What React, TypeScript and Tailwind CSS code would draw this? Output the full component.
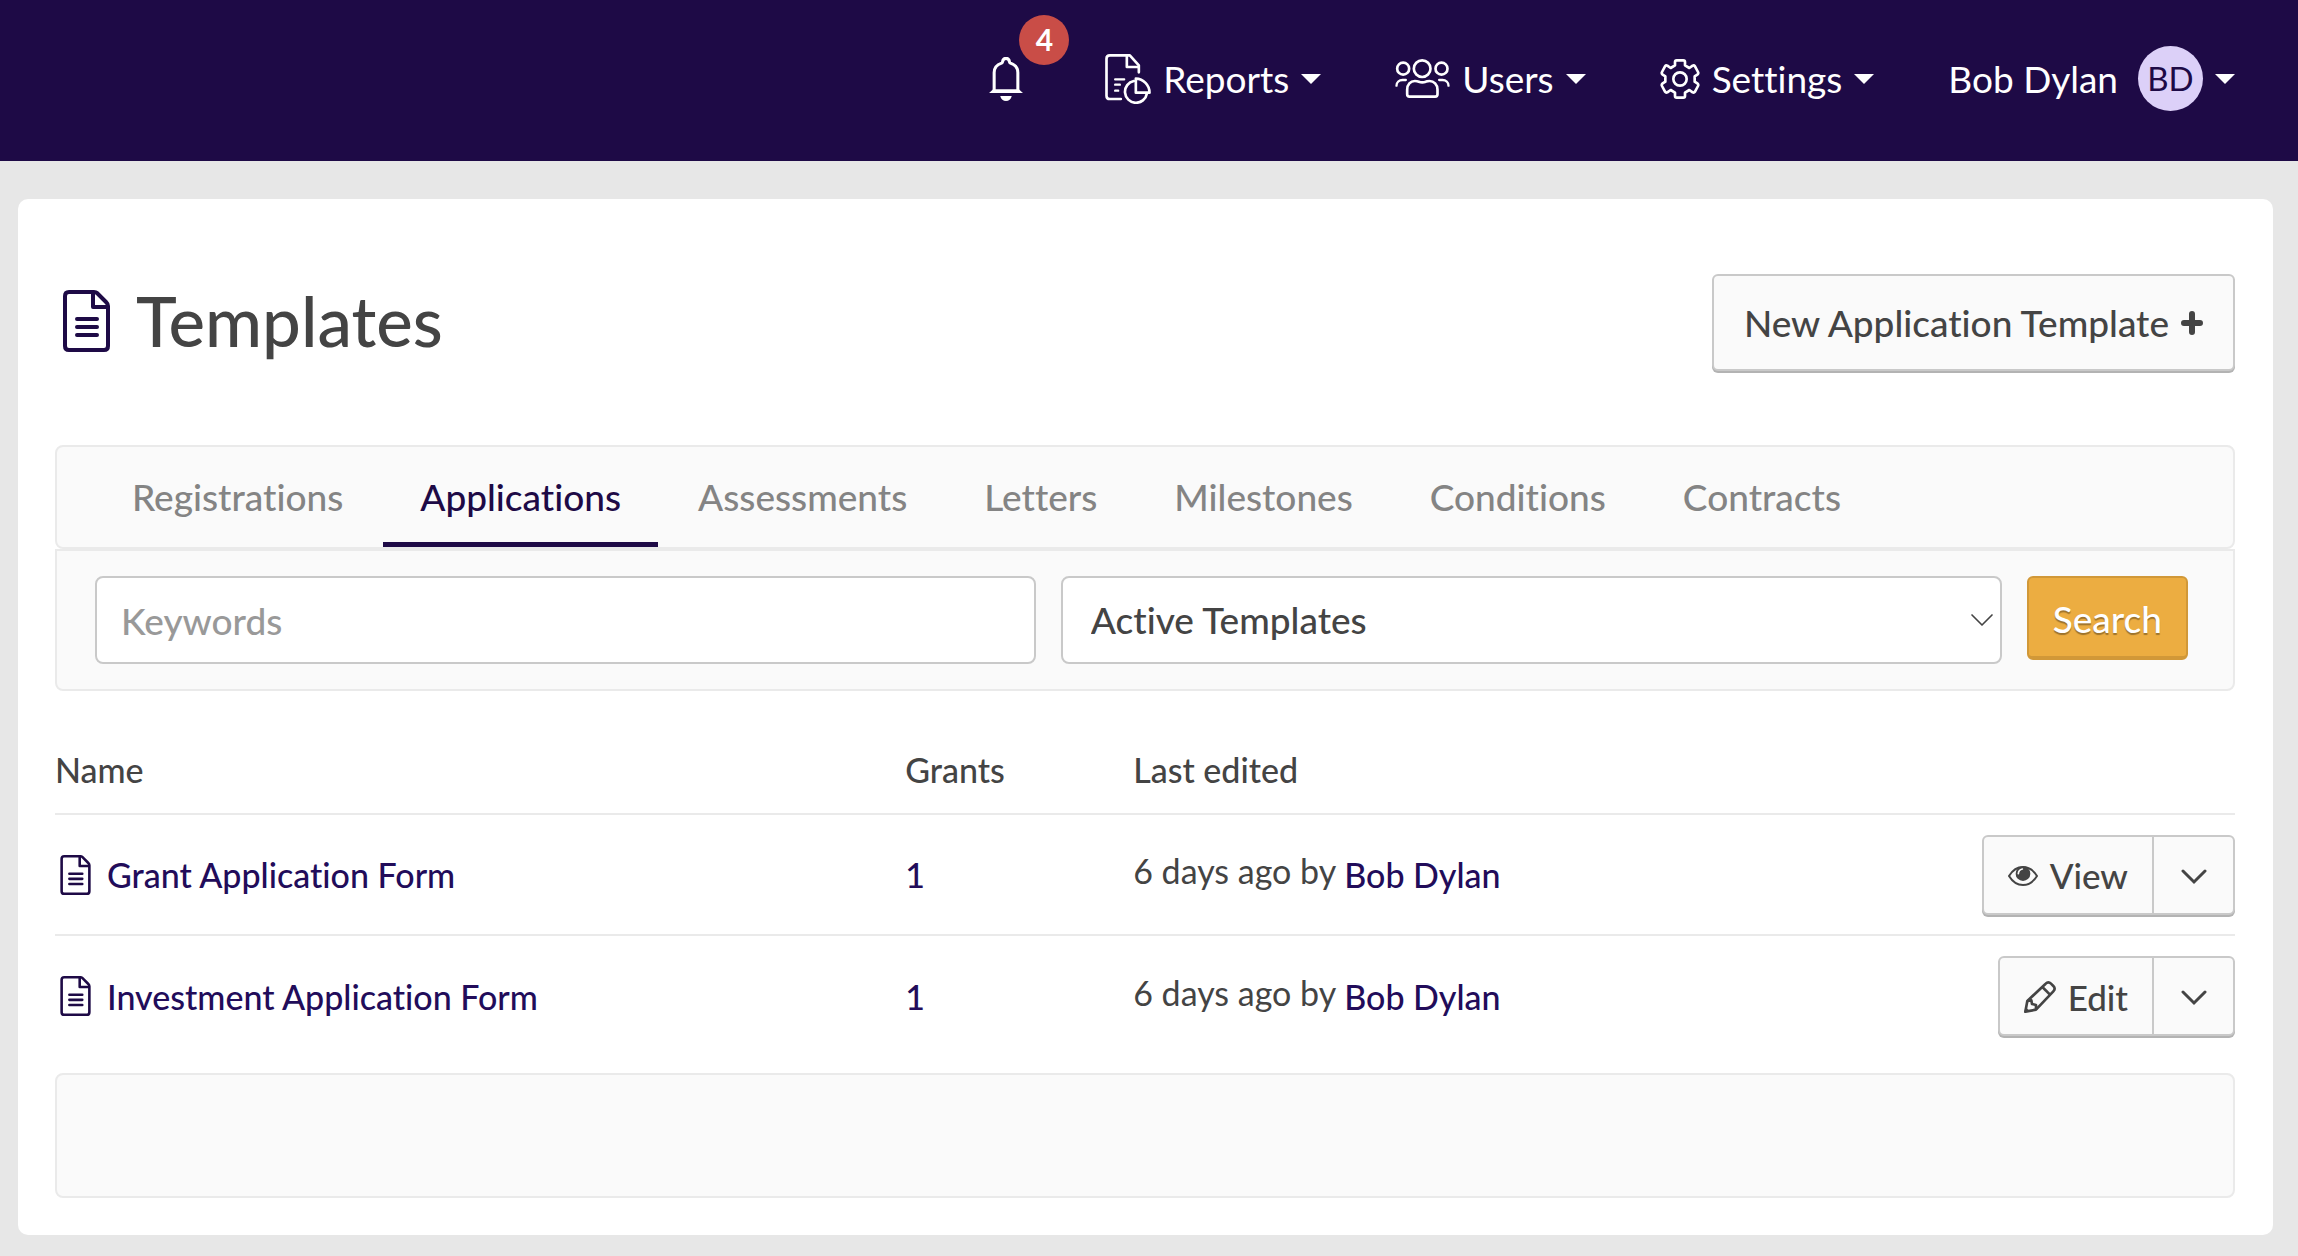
import { useState } from "react";
import type { ReactNode } from "react";
import { ChevronDown } from "lucide-react";

type Template = {
  id: string;
  name: string;
  grants: number;
  edited: string;
  editedBy: string;
  action: "View" | "Edit";
};

const templates: Template[] = [
  {
    id: "grant",
    name: "Grant Application Form",
    grants: 1,
    edited: "6 days ago by",
    editedBy: "Bob Dylan",
    action: "View",
  },
  {
    id: "investment",
    name: "Investment Application Form",
    grants: 1,
    edited: "6 days ago by",
    editedBy: "Bob Dylan",
    action: "Edit",
  },
];

const tabs = [
  "Registrations",
  "Applications",
  "Assessments",
  "Letters",
  "Milestones",
  "Conditions",
  "Contracts",
];

function BellIcon() {
  return (
    <svg viewBox="0 0 100 130" className="h-[44px] w-[34px]" aria-hidden="true">
      <path
        d="M15 98V46C15 32 25 22 37 18C39 17 40 15 40 13C41 7 45 4 50 4S59 7 60 13C60 15 61 17 63 18C75 22 85 32 85 46V98"
        fill="none"
        stroke="currentColor"
        strokeWidth="9"
      />
      <path d="M12 95H88L100 106H0Z" fill="currentColor" />
      <path d="M33 115H67C65 125 58 130 50 130S35 125 33 115Z" fill="currentColor" />
    </svg>
  );
}

function ReportIcon() {
  return (
    <svg viewBox="0 0 137 150" className="h-[50px] w-[46px]" aria-hidden="true">
      <g
        fill="none"
        stroke="currentColor"
        strokeWidth="8"
        strokeLinecap="round"
        strokeLinejoin="round"
      >
        <path d="M47 135H14Q4 135 4 125V14Q4 4 14 4H74L101 34V55" />
        <path d="M65 5V39H100" />
        <path d="M30 76H57M30 92H44M30 110H39" strokeWidth="7" />
        <path d="M92 74V116H133A42 42 0 0 0 92 74Z" />
        <path d="M86 81A33 33 0 1 0 125 119" />
      </g>
    </svg>
  );
}

function UsersIcon() {
  return (
    <svg viewBox="0 0 164 117" className="h-[39px] w-[55px]" aria-hidden="true">
      <g fill="none" stroke="currentColor" strokeWidth="8" strokeLinecap="round">
        <circle cx="81" cy="29" r="25" />
        <circle cx="24" cy="29" r="18" />
        <circle cx="139" cy="29" r="18" />
        <path d="M43 113H120Q127 113 127 106V92C127 76 116 66 103 66Q95 66 92 68Q81 72 71 68Q66 66 59 66C46 66 36 76 36 92V106Q36 113 43 113Z" />
        <path d="M4 80C4 70 12 63 22 63H32M160 80C160 70 152 63 142 63H132" strokeWidth="7" />
      </g>
    </svg>
  );
}

function GearIcon() {
  return (
    <svg viewBox="-60 -60 120 120" className="size-[40px]" aria-hidden="true">
      <g fill="none" stroke="currentColor" strokeWidth="8" strokeLinejoin="round">
        <path d="M-15 -41V-51Q-15 -56 -10 -56H10Q15 -56 15 -51V-41L28 -33L38 -40Q42 -42 45 -38L54 -21Q56 -17 53 -14L44 -8V8L53 14Q56 17 54 21L45 38Q42 42 38 40L28 33L15 41V51Q15 56 10 56H-10Q-15 56 -15 51V41L-28 33L-38 40Q-42 42 -45 38L-54 21Q-56 17 -53 14L-44 8V-8L-53 -14Q-56 -17 -54 -21L-45 -38Q-42 -42 -38 -40L-28 -33Z" />
        <circle r="20" />
      </g>
    </svg>
  );
}

function DocumentIcon({ className }: { className: string }) {
  return (
    <svg viewBox="0 0 47 62" className={className} aria-hidden="true">
      <g
        fill="none"
        stroke="currentColor"
        strokeWidth="4"
        strokeLinecap="round"
        strokeLinejoin="round"
      >
        <path d="M6 2H31Q33 2 34 3L43 12Q45 14 45 16V56Q45 60 41 60H6Q2 60 2 56V6Q2 2 6 2Z" />
        <path d="M30 3V17H44" />
        <path d="M14 29H34M14 37H34M14 45H34" />
      </g>
    </svg>
  );
}

function EyeIcon() {
  return (
    <svg viewBox="0 0 90 60" className="h-[20px] w-[30px]" aria-hidden="true">
      <path
        d="M3 30C14 12 28 3 45 3S76 12 87 30C76 48 62 57 45 57S14 48 3 30Z"
        fill="none"
        stroke="currentColor"
        strokeWidth="6"
      />
      <circle cx="45" cy="23" r="22" fill="currentColor" />
      <path d="M31 23Q32 11 43 9" fill="none" stroke="#fafafa" strokeWidth="5" strokeLinecap="round" />
    </svg>
  );
}

function PencilIcon() {
  return (
    <svg viewBox="0 0 96 96" className="size-[32px]" aria-hidden="true">
      <g fill="none" stroke="currentColor" strokeWidth="8" strokeLinejoin="round">
        <path d="M10 60L65 8Q73 0 81 8L88 15Q96 23 88 31L36 86L4 92Z" />
        <path d="M55 18L78 41" />
        <path d="M10 60L22 58L24 69L36 72L36 86" />
      </g>
      <path d="M4 78L18 91L1 95Z" fill="currentColor" />
    </svg>
  );
}

function PlusIcon() {
  return (
    <svg viewBox="0 0 22 26" className="h-[26px] w-[22px]" aria-hidden="true">
      <path d="M11 4V22M3 13H19" stroke="currentColor" strokeWidth="6" strokeLinecap="round" />
    </svg>
  );
}

function Caret() {
  return (
    <svg viewBox="0 0 20 10" className="h-[10px] w-[20px]" aria-hidden="true">
      <path d="M0 0H20L10 10Z" fill="currentColor" />
    </svg>
  );
}

function NavMenu({ icon, label }: { icon: ReactNode; label: string }) {
  return (
    <button type="button" className="flex items-center gap-3">
      {icon}
      <span>{label}</span>
      <Caret />
    </button>
  );
}

function RowActions({ action }: { action: Template["action"] }) {
  return (
    <div className="inline-flex h-[80px] rounded-[6px] border-2 border-[#c9c9c9] bg-[#fafafa] text-[#444] shadow-[0_2px_0_#b3b3b3]">
      <button
        type="button"
        className="flex items-center gap-3 border-r-2 border-[#c9c9c9] px-6 pt-[2px] text-[35px] font-medium"
      >
        {action === "View" ? <EyeIcon /> : <PencilIcon />}
        {action}
      </button>
      <button
        type="button"
        aria-label="More actions"
        className="flex w-[79px] items-center justify-center pt-1"
      >
        <svg viewBox="0 0 26 16" className="h-[16px] w-[26px]" aria-hidden="true">
          <path
            d="M2 2L13 13L24 2"
            fill="none"
            stroke="currentColor"
            strokeWidth="3"
            strokeLinecap="round"
          />
        </svg>
      </button>
    </div>
  );
}

export default function App() {
  const [activeTab, setActiveTab] = useState("Applications");

  return (
    <div className="min-h-screen bg-[#e7e7e7] font-['Lato',sans-serif] text-[#444] [font-variant-ligatures:none]">
      <header className="flex h-[161px] items-center justify-end bg-[#1e0a46] pr-[63px] pb-1 text-[37px] text-white">
        <nav className="flex items-center gap-[74px]">
          <button type="button" aria-label="Notifications" className="relative mr-2">
            <BellIcon />
            <span className="absolute -top-[42px] left-[30px] flex size-[50px] items-center justify-center rounded-full bg-[#c94d47] text-[30px] font-bold">
              4
            </span>
          </button>
          <NavMenu icon={<ReportIcon />} label="Reports" />
          <NavMenu icon={<UsersIcon />} label="Users" />
          <NavMenu icon={<GearIcon />} label="Settings" />
          <button type="button" className="flex items-center gap-3">
            <span className="mr-2">Bob Dylan</span>
            <span className="flex size-[65px] items-center justify-center rounded-full bg-[#dcd0f8] text-[33px] text-[#1e0a46]">
              BD
            </span>
            <Caret />
          </button>
        </nav>
      </header>

      <main className="mt-[38px] mr-[25px] ml-[18px] rounded-[10px] bg-white pt-[75px] pr-[38px] pb-[37px] pl-[37px]">
        <div className="mb-[74px] flex items-center justify-between">
          <h1 className="flex items-center gap-[26px] pb-1 pl-2 text-[69px] leading-[80px] font-medium">
            <DocumentIcon className="h-[62px] w-[47px] text-[#1e0a46]" />
            Templates
          </h1>
          <button
            type="button"
            className="flex h-[97px] items-center gap-3 rounded-[6px] border-2 border-[#c9c9c9] bg-[#fafafa] px-[30px] text-[37px] font-medium shadow-[0_2px_0_#b3b3b3]"
          >
            New Application Template
            <PlusIcon />
          </button>
        </div>

        <div
          role="tablist"
          className="flex h-[104px] gap-[3px] rounded-[8px] border-2 border-[#eaeaea] bg-[#fafafa] px-[38px] text-[37px] font-medium"
        >
          {tabs.map((tab) => (
            <button
              key={tab}
              type="button"
              role="tab"
              aria-selected={tab === activeTab}
              onClick={() => setActiveTab(tab)}
              className={
                tab === activeTab
                  ? "border-b-[5px] border-[#1e0a46] px-[37px] pt-1 text-[#1e0a46]"
                  : "border-b-[5px] border-transparent px-[37px] pt-1 text-[#848484]"
              }
            >
              {tab}
            </button>
          ))}
        </div>

        <form
          onSubmit={(e) => e.preventDefault()}
          className="grid grid-cols-[1fr_1fr_auto] items-start gap-[25px] rounded-b-[8px] border-2 border-[#eaeaea] bg-[#fafafa] py-[25px] pr-[45px] pl-[38px] text-[37px] font-medium"
        >
          <input
            type="text"
            aria-label="Keywords"
            placeholder="Keywords"
            className="h-[88px] w-full rounded-[8px] border-2 border-[#c9c9c9] bg-white px-6 placeholder:text-[#999]"
          />
          <div className="relative">
            <select
              aria-label="Template status"
              className="h-[88px] w-full appearance-none rounded-[8px] border-2 border-[#c9c9c9] bg-white px-[28px]"
            >
              <option>Active Templates</option>
              <option>Archived Templates</option>
            </select>
            <ChevronDown
              className="pointer-events-none absolute top-[24px] right-0 size-[40px]"
              strokeWidth={1}
              aria-hidden="true"
            />
          </div>
          <button
            type="submit"
            className="h-[84px] rounded-[6px] border-2 border-b-4 border-[#d19838] bg-[#ecad41] px-6 pt-1 text-white [text-shadow:0_2px_1px_#00000055]"
          >
            Search
          </button>
        </form>

        <table className="mt-[39px] w-full table-fixed text-left text-[34px]">
          <thead>
            <tr className="h-[84px] border-b-2 border-[#eaeaea]">
              <th className="w-[39%] pb-1 font-medium">Name</th>
              <th className="w-[228px] pb-1 font-medium">Grants</th>
              <th className="pb-1 font-medium">Last edited</th>
              <td className="w-[280px]" />
            </tr>
          </thead>
          <tbody className="divide-y-2 divide-[#eaeaea]">
            {templates.map((template) => (
              <tr key={template.id} className="h-[121px]">
                <td>
                  <a
                    href={`#${template.id}`}
                    className="flex items-center gap-4 pl-[5px] font-medium text-[#220c5a]"
                  >
                    <DocumentIcon className="h-[40px] w-[31px] text-[#1e0a46]" />
                    {template.name}
                  </a>
                </td>
                <td>
                  <a href={`#${template.id}-grants`} className="font-medium text-[#220c5a]">
                    {template.grants}
                  </a>
                </td>
                <td>
                  <div className="flex items-center gap-2">
                    <span className="pb-2">{template.edited}</span>
                    <a href="#bob-dylan" className="font-medium text-[#220c5a]">
                      {template.editedBy}
                    </a>
                  </div>
                </td>
                <td>
                  <div className="flex justify-end">
                    <RowActions action={template.action} />
                  </div>
                </td>
              </tr>
            ))}
          </tbody>
        </table>

        <div className="mt-[17px] h-[125px] rounded-[8px] border-2 border-[#eaeaea] bg-[#fafafa]" />
      </main>
    </div>
  );
}
